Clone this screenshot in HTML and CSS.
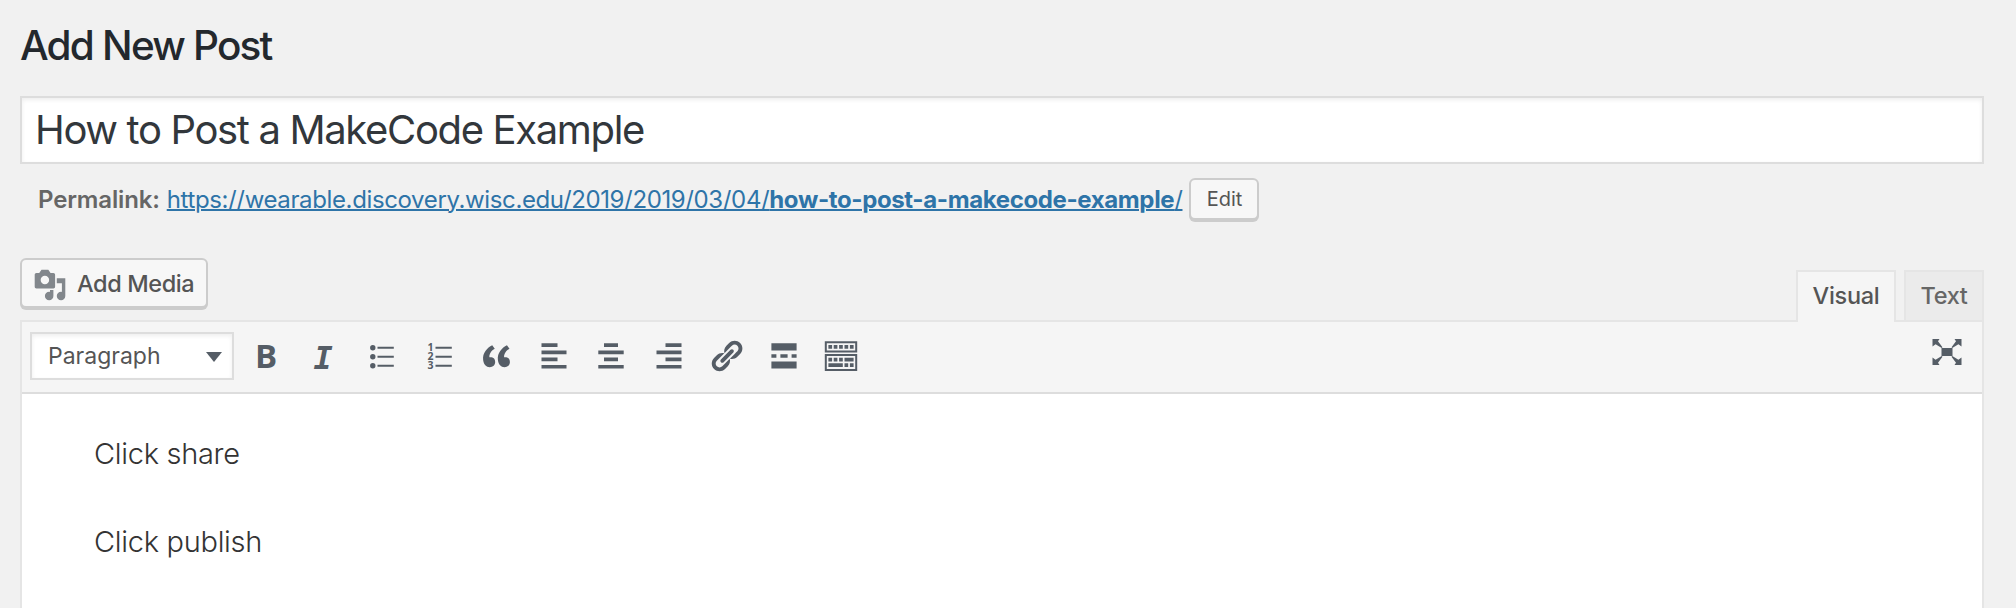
FILE: index.html
```
<!DOCTYPE html>
<html lang="en">
<head>
    <meta charset="utf-8">
    <title>Add New Post</title>
    <link rel="stylesheet" href="styles.css">
</head>
<body>
    <div class="wrap">
        <h1 class="page-title">Add New Post</h1>

        <div class="title-box"><span class="post-title">How to Post a MakeCode Example</span></div>

        <div class="permalink">
            <strong class="permalink-label">Permalink:</strong>
            <a class="permalink-url" href="#"><span class="url-base">https://wearable.discovery.wisc.edu/2019/2019/03/04/</span><b class="url-slug">how-to-post-a-makecode-example</b>/</a>
            <button class="button edit-slug">Edit</button>
        </div>

        <div class="editor-tools">
            <button class="button add-media">
                <svg class="media-icon" viewBox="0 0 20 20"><path d="M13 11V4c0-.55-.45-1-1-1h-1.67L9 1H5L3.67 3H2c-.55 0-1 .45-1 1v7c0 .55.45 1 1 1h10c.55 0 1-.45 1-1zM7 4.5c1.38 0 2.5 1.12 2.5 2.5S8.38 9.5 7 9.5 4.5 8.38 4.5 7 5.62 4.5 7 4.5zM14 6h5v10.5c0 1.38-1.12 2.5-2.5 2.5S14 17.88 14 16.5s1.12-2.5 2.5-2.5c.17 0 .34.02.5.05V9h-3V6zm-4 8.05V13h2v3.5c0 1.38-1.12 2.5-2.5 2.5S7 17.88 7 16.5 8.12 14 9.5 14c.17 0 .34.02.5.05z"/></svg>
                <span>Add Media</span>
            </button>
            <div class="tabs">
                <button class="tab active">Visual</button>
                <button class="tab tab-text">Text</button>
            </div>
        </div>

        <div class="editor">
            <div class="toolbar">
                <div class="format-select">
                    <span>Paragraph</span>
                    <svg class="caret" viewBox="0 0 16 10"><path d="M0 0h16L8 10z"/></svg>
                </div>
                <div class="icons">
                    <!-- bold -->
                    <svg class="icon" viewBox="0 0 40 40"><text class="glyph-bold" x="9" y="32">B</text></svg>
                    <!-- italic -->
                    <svg class="icon" viewBox="0 0 40 40"><text class="glyph-italic" x="9.5" y="32.5">I</text></svg>
                    <!-- bullet list -->
                    <svg class="icon" viewBox="0 0 40 40"><circle cx="11.8" cy="11.8" r="2.7"/><circle cx="11.8" cy="20.8" r="2.7"/><circle cx="11.8" cy="29.8" r="2.7"/><path d="M16.5 10.8h16.3v2H16.5zM16.5 19.8h16.3v2H16.5zM16.5 28.8h16.3v2H16.5z"/></svg>
                    <!-- numbered list -->
                    <svg class="icon" viewBox="0 0 40 40"><text class="glyph-num" x="8.6" y="14.7">1</text><text class="glyph-num" x="8.6" y="23.7">2</text><text class="glyph-num" x="8.6" y="32.9">3</text><path d="M16.5 10.8h16.3v2H16.5zM16.5 19.8h16.3v2H16.5zM16.5 28.8h16.3v2H16.5z"/></svg>
                    <!-- quote -->
                    <svg class="icon" viewBox="0 0 40 40"><path transform="translate(1.8 1.9) scale(1.83)" d="M9.49 13.22c0-.74-.2-1.38-.61-1.9-.62-.78-1.83-.88-2.53-.72-.29-1.65 1.11-3.75 2.92-4.65L7.88 4c-2.73 1.3-5.42 4.28-4.96 8.05C3.21 14.43 4.59 16 6.54 16c.85 0 1.56-.25 2.12-.75s.83-1.18.83-2.03zm8.05 0c0-.74-.2-1.38-.61-1.9-.63-.78-1.83-.88-2.53-.72-.29-1.65 1.11-3.75 2.92-4.65L15.93 4c-2.73 1.3-5.41 4.28-4.95 8.05.29 2.38 1.66 3.95 3.61 3.95.85 0 1.56-.25 2.12-.75s.83-1.18.83-2.03z"/></svg>
                    <!-- align left, center, right -->
                    <svg class="icon" viewBox="0 0 40 40"><path d="M7.5 7.2h16v3.7h-16zM7.5 14.5h25v3.7h-25zM7.5 21.6h16v3.7h-16zM7.5 28.9h25v3.7h-25z"/></svg>
                    <svg class="icon" viewBox="0 0 40 40"><path d="M13 7.2h14v3.7H13zM7.3 14.5h25.4v3.7H7.3zM13 21.6h14v3.7H13zM7.3 28.9h25.4v3.7H7.3z"/></svg>
                    <svg class="icon" viewBox="0 0 40 40"><path d="M16.5 7.2h16v3.7h-16zM7.5 14.5h25v3.7h-25zM16.5 21.6h16v3.7h-16zM7.5 28.9h25v3.7h-25z"/></svg>
                    <!-- link -->
                    <svg class="icon" viewBox="0 0 40 40"><path transform="translate(2.2 2) scale(1.8)" d="M17.74 2.76c1.68 1.69 1.68 4.41 0 6.1l-1.53 1.52c-1.12 1.12-2.7 1.47-4.14 1.09l2.62-2.61.76-.77.76-.76c.84-.84.84-2.2 0-3.04-.84-.85-2.2-.85-3.04 0l-.77.76-3.38 3.38c-.37-1.44-.02-3.02 1.1-4.14l1.52-1.53c1.69-1.68 4.42-1.68 6.1 0zM8.59 13.43l5.34-5.34c.42-.42.42-1.1 0-1.52-.44-.43-1.13-.39-1.53 0l-5.33 5.34c-.42.42-.42 1.1 0 1.52.44.43 1.13.39 1.52 0zm-.76 2.29l4.14-4.15c.38 1.44.03 3.02-1.09 4.14l-1.52 1.53c-1.69 1.68-4.41 1.68-6.1 0-1.68-1.68-1.68-4.42 0-6.1l1.53-1.52c1.12-1.12 2.7-1.47 4.14-1.1l-4.14 4.15c-.85.84-.85 2.2 0 3.05.84.84 2.2.84 3.04 0z"/></svg>
                    <!-- read more -->
                    <svg class="icon" viewBox="0 0 40 40"><path d="M7.4 7.2h25.2v7.2H7.4zM7.4 18.2h5v3.6h-5zM16.4 18.2h7.2v3.6h-7.2zM27.6 18.2h5v3.6h-5zM7.4 25.4h25.2v7.2H7.4z"/></svg>
                    <!-- toolbar toggle -->
                    <svg class="icon" viewBox="0 0 40 40"><path fill-rule="evenodd" d="M3.8 5.200h32.400v11.200H3.800zM5.800 7.200v7.200h28.400V7.200zM3.800 18h32.400v17H3.800zM5.800 20v13h28.400V20z"/><path d="M7.400 9h3.700v3.700H7.400zM12.700 9h3.700v3.700h-3.700zM18.100 9h3.700v3.700h-3.700zM23.500 9h3.700v3.700h-3.700zM28.900 9h3.700v3.700h-3.700zM7.400 21.700h3.700v3.700H7.400zM12.700 21.700h3.700v3.700h-3.700zM18.100 21.700h3.700v3.700h-3.700zM23.500 21.700h9.100v3.700h-9.100zM7.400 27.200h14.400v3.700H7.400zM23.500 27.200h3.700v3.700h-3.700zM28.900 27.200h3.700v3.700h-3.700z"/></svg>
                </div>
                <!-- distraction free -->
                <svg class="fullscreen" viewBox="0 0 30 26"><path d="M9.5 9h11v8h-11zM.5 0h7L6 2.200 10.500 8.200 9.700 9 3.600 5.200.5 7.500zM29.500 0h-7L24 2.200 19.500 8.200l.8.8 6.100-3.800 3.100 2.300zM.5 26h7L6 23.800l4.500-6-.8-.8-6.100 3.800L.5 18.500zM29.500 26h-7l1.500-2.200-4.500-6 .8-.8 6.100 3.800 3.100-2.300z"/></svg>
            </div>
            <div class="content">
                <p>Click share</p>
                <p>Click publish</p>
            </div>
        </div>
    </div>
</body>
</html>
```
FILE: styles.css
```
* {
    box-sizing: border-box;
}

body {
    margin: 0;
    height: 608px;
    overflow: hidden;
    background: #f1f1f1;
    color: #444;
    font-family: Inter, "Liberation Sans", sans-serif;
}

.wrap {
    display: flex;
    flex-direction: column;
    height: 608px;
    padding: 0 32px 0 20px;
}

.page-title {
    flex: none;
    margin: 0;
    height: 96px;
    padding-top: 21px;
    color: #23282d;
    font-size: 40.5px;
    font-weight: 500;
    line-height: 50px;
    letter-spacing: -1.8px;
}

.title-box {
    flex: none;
    height: 68px;
    padding: 0 13px;
    border: 2px solid #ddd;
    background: #fff;
    box-shadow: inset 0 2px 4px rgba(0, 0, 0, 0.07);
    color: #32373c;
    font-size: 40px;
    font-weight: 400;
    line-height: 64px;
    letter-spacing: -1.35px;
}

.permalink {
    display: flex;
    align-items: center;
    flex: none;
    height: 94px;
    padding: 0 0 24px 18px;
    color: #666;
    font-size: 24px;
    letter-spacing: -0.37px;
}

.permalink-label {
    margin-right: 7px;
    font-weight: 600;
    letter-spacing: -0.15px;
}

.permalink-url {
    color: #2e74a8;
    text-decoration-thickness: 2px;
}

.url-slug {
    font-weight: 700;
}

.button {
    border: 2px solid #ccc;
    border-radius: 6px;
    background: #f7f7f7;
    box-shadow: 0 2px 0 #ccc;
    color: #555;
    font-family: inherit;
}

.edit-slug {
    width: 70px;
    height: 42px;
    margin-left: 7px;
    padding: 0;
    font-size: 20px;
}

.editor-tools {
    display: flex;
    justify-content: space-between;
    flex: none;
    height: 62px;
}

.add-media {
    display: flex;
    align-items: center;
    width: 188px;
    height: 50px;
    padding: 0 0 0 11px;
    font-size: 23.5px;
    font-weight: 500;
    letter-spacing: -0.4px;
    white-space: nowrap;
}

.media-icon {
    flex: none;
    width: 34px;
    height: 34px;
    margin: 4px 10px 0 0;
    fill: #82878c;
}

.tabs {
    display: flex;
    gap: 8px;
    padding-top: 12px;
}

.tab {
    height: 50px;
    padding: 0 0 2px;
    border: 2px solid #e5e5e5;
    border-bottom: 0;
    background: #ebebeb;
    color: #666;
    font-family: inherit;
    font-size: 23.5px;
    font-weight: 500;
    letter-spacing: -0.3px;
}

.tab.active {
    position: relative;
    width: 100px;
    height: 52px;
    padding-bottom: 4px;
    background: #f5f5f5;
    color: #555;
}

.tab-text {
    width: 80px;
}

.editor {
    flex: 1;
    min-height: 0;
    border: 2px solid #e5e5e5;
    border-bottom: 0;
    background: #fff;
}

.toolbar {
    display: flex;
    height: 72px;
    padding: 10px 20px 0 8px;
    border-bottom: 2px solid #ddd;
    background: #f5f5f5;
}

.format-select {
    display: flex;
    align-items: center;
    justify-content: space-between;
    width: 204px;
    height: 48px;
    padding: 0 10px 0 16px;
    border: 2px solid #ddd;
    background: #fff;
    box-shadow: inset 0 2px 4px rgba(0, 0, 0, 0.07);
    color: #555;
    font-size: 23px;
}

.caret {
    width: 16px;
    height: 10px;
    margin-top: 2px;
    fill: #555d66;
}

.icons {
    display: flex;
    gap: 17.5px;
    padding: 4px 0 0 12px;
}

.icon {
    width: 40px;
    height: 40px;
    overflow: visible;
    fill: #555d66;
}

.glyph-bold {
    font: 700 33px "Open Sans", sans-serif;
}

.glyph-italic {
    font: italic 700 32px "DejaVu Sans Mono", monospace;
}

.glyph-num {
    font: 700 10.5px "Open Sans", sans-serif;
}

.fullscreen {
    width: 30px;
    height: 26px;
    margin: 7px 0 0 auto;
    fill: #555d66;
}

.content {
    padding: 38px 72px 0;
    color: #333;
    font-size: 29px;
    font-weight: 300;
    letter-spacing: -0.3px;
}

.content p {
    margin: 0;
    line-height: 44px;
}

.content p + p {
    margin-top: 44px;
}
```
